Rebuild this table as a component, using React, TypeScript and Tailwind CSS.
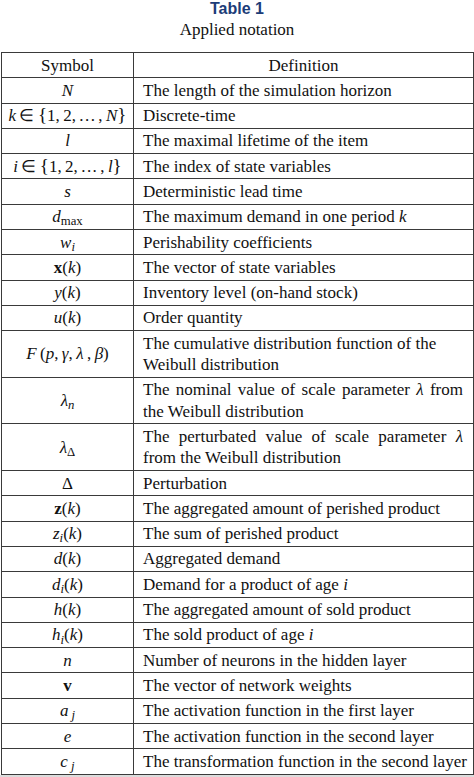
import React from "react";

const I = ({ children }: { children: React.ReactNode }) => <i>{children}</i>;
const B = ({ children }: { children: React.ReactNode }) => <b className="font-bold not-italic">{children}</b>;
const Sub = ({ children, italic = true }: { children: React.ReactNode; italic?: boolean }) => (
  <sub className={italic ? "italic" : "not-italic"}>{children}</sub>
);
const Br = ({ c }: { c: string }) => <span className="text-[19px] leading-[0]">{c}</span>;

type Row = { sym: React.ReactNode; def: React.ReactNode; lines?: React.ReactNode[]; justify?: boolean };

const rows: Row[] = [
  { sym: <I>N</I>, def: "The length of the simulation horizon" },
  {
    sym: (
      <span>
        <I>k</I>&thinsp;∈&thinsp;<Br c="{" />1,&thinsp;2,&thinsp;.&#8202;.&#8202;.&thinsp;,&thinsp;<I>N</I>
        <Br c="}" />
      </span>
    ),
    def: "Discrete-time",
  },
  { sym: <I>l</I>, def: "The maximal lifetime of the item" },
  {
    sym: (
      <span>
        <I>i</I>&thinsp;∈&thinsp;<Br c="{" />1,&thinsp;2,&thinsp;.&#8202;.&#8202;.&thinsp;,&thinsp;<I>l</I>
        <Br c="}" />
      </span>
    ),
    def: "The index of state variables",
  },
  { sym: <I>s</I>, def: "Deterministic lead time" },
  {
    sym: (
      <span>
        <I>d</I>
        <Sub italic={false}>max</Sub>
      </span>
    ),
    def: (
      <span>
        The maximum demand in one period <I>k</I>
      </span>
    ),
  },
  {
    sym: (
      <span>
        <I>w</I>
        <Sub>i</Sub>
      </span>
    ),
    def: "Perishability coefficients",
  },
  {
    sym: (
      <span>
        <B>x</B>(<I>k</I>)
      </span>
    ),
    def: "The vector of state variables",
  },
  {
    sym: (
      <span>
        <I>y</I>(<I>k</I>)
      </span>
    ),
    def: "Inventory level (on-hand stock)",
  },
  {
    sym: (
      <span>
        <I>u</I>(<I>k</I>)
      </span>
    ),
    def: "Order quantity",
  },
  {
    sym: (
      <span>
        <I>F</I>&thinsp;(<I>p</I>,&thinsp;<I>γ</I>,&thinsp;<I>λ</I>&thinsp;,&thinsp;<I>β</I>)
      </span>
    ),
    def: null,
    lines: ["The cumulative distribution function of the", "Weibull distribution"],
  },
  {
    sym: (
      <span>
        <I>λ</I>
        <Sub>n</Sub>
      </span>
    ),
    def: null,
    justify: true,
    lines: [
      <span key="a">
        The nominal value of scale parameter <I>λ</I> from
      </span>,
      "the Weibull distribution",
    ],
  },
  {
    sym: (
      <span>
        <I>λ</I>
        <Sub italic={false}>Δ</Sub>
      </span>
    ),
    def: null,
    justify: true,
    lines: [
      <span key="b">
        The perturbated value of scale parameter <I>λ</I>
      </span>,
      "from the Weibull distribution",
    ],
  },
  { sym: <span>Δ</span>, def: "Perturbation" },
  {
    sym: (
      <span>
        <B>z</B>(<I>k</I>)
      </span>
    ),
    def: "The aggregated amount of perished product",
  },
  {
    sym: (
      <span>
        <I>z</I>
        <Sub>i</Sub>(<I>k</I>)
      </span>
    ),
    def: "The sum of perished product",
  },
  {
    sym: (
      <span>
        <I>d</I>(<I>k</I>)
      </span>
    ),
    def: "Aggregated demand",
  },
  {
    sym: (
      <span>
        <I>d</I>
        <Sub>i</Sub>(<I>k</I>)
      </span>
    ),
    def: (
      <span>
        Demand for a product of age <I>i</I>
      </span>
    ),
  },
  {
    sym: (
      <span>
        <I>h</I>(<I>k</I>)
      </span>
    ),
    def: "The aggregated amount of sold product",
  },
  {
    sym: (
      <span>
        <I>h</I>
        <Sub>i</Sub>(<I>k</I>)
      </span>
    ),
    def: (
      <span>
        The sold product of age <I>i</I>
      </span>
    ),
  },
  { sym: <I>n</I>, def: "Number of neurons in the hidden layer" },
  { sym: <B>v</B>, def: "The vector of network weights" },
  {
    sym: (
      <span>
        <I>a</I>
        <Sub> j</Sub>
      </span>
    ),
    def: "The activation function in the first layer",
  },
  { sym: <I>e</I>, def: "The activation function in the second layer" },
  {
    sym: (
      <span>
        <I>c</I>
        <Sub> j</Sub>
      </span>
    ),
    def: "The transformation function in the second layer",
  },
];

export default function App() {
  return (
    <div
      className="w-[474px] h-[777px] bg-[#dcdcdc] overflow-hidden text-[#111]"
      style={{ fontFamily: '"Liberation Serif", "Times New Roman", serif' }}
    >
      <div className="bg-white">
        <div className="h-[52px] flex flex-col items-center">
          <div
            className="text-[16px] leading-[18px] font-bold text-[#1c3c78]"
            style={{ fontFamily: '"Liberation Sans", Arial, sans-serif' }}
          >
            Table 1
          </div>
          <div className="text-[17px] leading-[20px] mt-[2px]">Applied notation</div>
        </div>
        <table className="w-[473px] ml-[1px] table-fixed border-collapse text-[17px] leading-[21.3px]">
          <colgroup>
            <col className="w-[132px]" />
            <col />
          </colgroup>
          <thead>
            <tr>
              <th className="font-normal border border-[#3a3a3a] py-[1.5px] text-center">Symbol</th>
              <th className="font-normal border border-[#3a3a3a] py-[1.5px] text-center">Definition</th>
            </tr>
          </thead>
          <tbody>
            {rows.map((r, idx) => (
              <tr key={idx}>
                <td className="border border-[#3a3a3a] py-[1.5px] text-center align-middle whitespace-nowrap">
                  {r.sym}
                </td>
                <td className="border border-[#3a3a3a] py-[1.5px] pl-[9px] pr-[10px] align-middle">
                  {r.lines ? (
                    r.lines.map((l, j) => (
                      <div
                        key={j}
                        className={
                          r.justify && j === 0
                            ? "text-justify [text-align-last:justify]"
                            : "whitespace-nowrap"
                        }
                      >
                        {l}
                      </div>
                    ))
                  ) : (
                    <div className="whitespace-nowrap">{r.def}</div>
                  )}
                </td>
              </tr>
            ))}
          </tbody>
        </table>
      </div>
    </div>
  );
}
